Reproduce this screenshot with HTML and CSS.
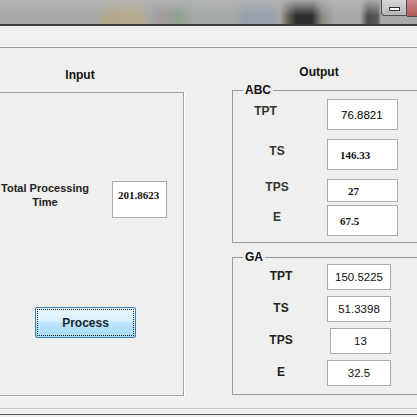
FILE: index.html
```html
<!DOCTYPE html>
<html lang="en">
<head>
  <meta charset="utf-8" />
  <title>Scheduler</title>
  <link rel="stylesheet" href="styles.css">
</head>
<body>
  <!-- blurred desktop strip + window buttons -->
  <div class="taskbar">
    <div class="win-btns">
      <span class="win-min"><span class="dash"></span></span>
      <span class="win-close"></span>
    </div>
  </div>
  <div class="toolbar"></div>

  <main class="form">
    <!-- input side -->
    <section class="col-input">
      <h2 class="col-title">Input</h2>
      <div class="panel">
        <div class="field-row">
          <label class="field-label">Total Processing<br>Time</label>
          <div class="field-box">201.8623</div>
        </div>
        <button class="btn-process">Process</button>
      </div>
    </section>

    <!-- output side -->
    <section class="col-output">
      <h2 class="col-title out">Output</h2>
      <fieldset class="group abc">
        <legend>ABC</legend>
        <div class="row"><span class="lbl off">TPT</span><span class="val sans">76.8821</span></div>
        <div class="row"><span class="lbl">TS</span><span class="val">146.33</span></div>
        <div class="row"><span class="lbl">TPS</span><span class="val thin">27</span></div>
        <div class="row tight"><span class="lbl">E</span><span class="val">67.5</span></div>
      </fieldset>
      <fieldset class="group ga">
        <legend>GA</legend>
        <div class="row"><span class="lbl">TPT</span><span class="val">150.5225</span></div>
        <div class="row"><span class="lbl">TS</span><span class="val">51.3398</span></div>
        <div class="row"><span class="lbl">TPS</span><span class="val narrow">13</span></div>
        <div class="row"><span class="lbl">E</span><span class="val">32.5</span></div>
      </fieldset>
    </section>
  </main>
  <div class="statusbar"></div>
</body>
</html>
```

FILE: styles.css
```css
body {
  margin: 0;
  width: 417px;
  height: 417px;
  overflow: hidden;
  background: #efefef;
  font-family: "Liberation Sans", Arial, sans-serif;
  color: #111;
}
.taskbar {
  height: 24px;
  border-bottom: 2px solid #3a3a3a;
  display: flex;
  justify-content: flex-end;
  background:
    linear-gradient(to bottom, rgba(178,180,182,0.9) 0, rgba(178,180,182,0.35) 40%, rgba(178,180,182,0) 65%),
    linear-gradient(to right, #a7a9ab 0, #a7a9ab 95px, #b3a98e 105px, #b5aa8c 140px, #a6a7a6 150px,
      #a59a9c 160px, #8ea38c 180px, #a6a9aa 195px, #a6a8aa 235px, #98a0ab 245px, #97a0ab 270px,
      #a4a7a9 280px, #6a625a 288px, #2f2d2b 296px, #2f2d2b 312px, #8f8a80 322px, #a7a9ab 335px,
      #a7a9ab 360px, #4c4c4c 368px, #5a5a5a 378px, #a7a9ab 381px);
}
.win-btns {
  display: flex;
  align-items: flex-start;
}
.win-min {
  width: 26px;
  height: 16px;
  box-sizing: border-box;
  border: 1px solid #4e4e4e;
  border-top: none;
  border-radius: 0 0 0 4px;
  background: linear-gradient(#d6d8da, #b4b6b8);
  display: flex;
  align-items: flex-end;
  justify-content: center;
  padding-bottom: 4px;
}
.win-min .dash {
  width: 9px;
  height: 2px;
  background: #fff;
  border: 1px solid #333;
}
.win-close {
  width: 10px;
  height: 16px;
  background: linear-gradient(#c98a8a, #b25858);
  border-bottom: 1px solid #4e4e4e;
}
.toolbar {
  height: 21px;
  border-bottom: 1px solid #9a9a9a;
  background: #f0f0f0;
}

/* form area */
.form {
  display: flex;
  height: 360px;
  border-bottom: 1px solid #c6c6c6;
}
.col-title {
  margin: 0;
  font-size: 12px;
  line-height: 14px;
  font-weight: bold;
  text-align: center;
}
.col-input {
  margin-left: -24px;
  width: 208px;
  flex-shrink: 0;
}
.col-input .col-title {
  padding-top: 20px;
  margin-bottom: 10px;
}
.panel {
  height: 304px;
  box-sizing: border-box;
  border: 1px solid #a0a0a0;
  box-shadow: 1px 1px 0 #fff;
  padding: 88px 0 0 21px;
}
.field-row {
  display: flex;
  gap: 20px;
  align-items: flex-start;
}
.field-label {
  width: 94px;
  text-align: center;
  font-size: 11px;
  line-height: 14px;
  font-weight: bold;
  color: #222;
}
.field-box {
  width: 55px;
  height: 37px;
  box-sizing: border-box;
  border: 1px solid #acacac;
  background: #fff;
  padding: 6px 0 0 5px;
  font-family: "Liberation Serif", "Times New Roman", serif;
  font-weight: bold;
  font-size: 11px;
  line-height: 14px;
}
.btn-process {
  display: block;
  margin: 89px 0 0 37px;
  width: 101px;
  height: 31px;
  box-sizing: border-box;
  border: 1px solid #3c7fb1;
  border-radius: 2px;
  background: linear-gradient(#eaf6fd 0, #d9f0fc 45%, #bee6fd 50%, #a7d9f5 100%);
  outline: 1px dotted #222;
  outline-offset: -3px;
  font-family: "Liberation Sans", Arial, sans-serif;
  font-weight: bold;
  font-size: 12px;
  color: #1b2633;
}

.col-output {
  margin-left: 48px;
  width: 200px;
  flex-shrink: 0;
}
.col-title.out {
  width: 174px;
  padding-top: 17px;
  margin-bottom: 4px;
}
.group {
  margin: 0;
  border: 1px solid #9c9c9c;
  min-width: 0;
}
.group legend {
  margin-left: 10px;
  padding: 0 2px;
  font-size: 12px;
  line-height: 14px;
  font-weight: bold;
}
.row {
  display: flex;
  align-items: center;
}
.lbl {
  width: 88px;
  text-align: center;
  font-size: 12px;
  line-height: 14px;
  font-weight: bold;
  color: #222;
}
.val {
  margin-left: 6px;
  box-sizing: border-box;
  border: 1px solid #acacac;
  background: #fff;
  display: flex;
  align-items: center;
}

.abc {
  padding: 2px 0 6px 0;
}
.abc .row + .row {
  margin-top: 9px;
}
.abc .row.tight {
  margin-top: 3px;
}
.abc .lbl {
  margin-bottom: 8px;
  color: #333;
}
.abc .lbl.off {
  padding-right: 23px;
  width: 65px;
}
.abc .val {
  width: 71px;
  height: 31px;
  padding-left: 12px;
  font-family: "Liberation Serif", "Times New Roman", serif;
  font-weight: bold;
  font-size: 11px;
}
.abc .val.sans {
  font-family: "Liberation Sans", Arial, sans-serif;
  font-weight: normal;
  font-size: 11.5px;
  padding-left: 13px;
  color: #000;
}
.abc .val.thin {
  height: 23px;
  padding-left: 20px;
}

.ga {
  margin-top: 7px;
  padding: 0 0 8px 0;
}
.ga .row + .row {
  margin-top: 6px;
}
.ga .lbl {
  margin-bottom: 2px;
  padding-left: 8px;
  width: 80px;
}
.ga .val {
  width: 64px;
  height: 26px;
  justify-content: center;
  font-size: 11.5px;
}
.ga .val.narrow {
  width: 61px;
  margin-left: 9px;
}
.statusbar {
  height: 5px;
  border-bottom: 1px solid #555;
}
```
